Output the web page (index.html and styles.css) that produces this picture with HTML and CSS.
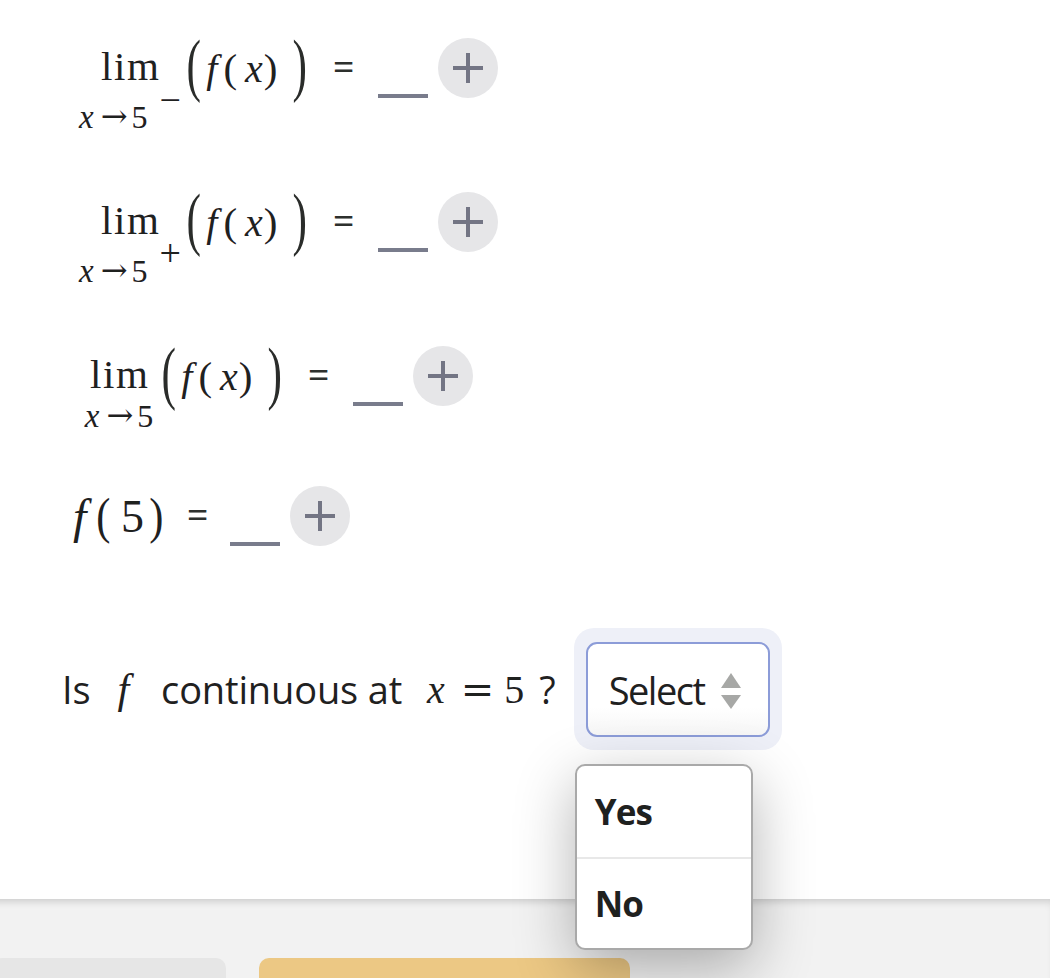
FILE: index.html
```html
<!DOCTYPE html>
<html lang="en">
<head>
<meta charset="utf-8">
<title>Limits</title>
<link rel="stylesheet" href="styles.css">
</head>
<body>
<main class="sheet">
  <div class="row row-1">
    <div class="lim-col lim-wide">
      <span class="lim">lim</span>
      <span class="sub"><span class="sx">x</span><span class="arrow">→</span><span class="sd">5</span><span class="sup sup-minus">−</span></span>
    </div>
    <span class="bigp">(</span><span class="mf">f</span><span class="p">(</span><span class="mx">x</span><span class="p">)</span><span class="bigp bigp-r">)</span>
    <span class="eq">=</span>
    <div class="ans"><span class="blank"></span><button class="plus" aria-label="add"><span class="plus-h"></span><span class="plus-v"></span></button></div>
  </div>

  <div class="row row-2">
    <div class="lim-col lim-wide">
      <span class="lim">lim</span>
      <span class="sub"><span class="sx">x</span><span class="arrow">→</span><span class="sd">5</span><span class="sup sup-plus">+</span></span>
    </div>
    <span class="bigp">(</span><span class="mf">f</span><span class="p">(</span><span class="mx">x</span><span class="p">)</span><span class="bigp bigp-r">)</span>
    <span class="eq">=</span>
    <div class="ans"><span class="blank"></span><button class="plus" aria-label="add"><span class="plus-h"></span><span class="plus-v"></span></button></div>
  </div>

  <div class="row row-3">
    <div class="lim-col lim-narrow">
      <span class="lim">lim</span>
      <span class="sub sub-plain"><span class="sx">x</span><span class="arrow">→</span><span class="sd">5</span></span>
    </div>
    <span class="bigp">(</span><span class="mf">f</span><span class="p">(</span><span class="mx">x</span><span class="p">)</span><span class="bigp bigp-r">)</span>
    <span class="eq">=</span>
    <div class="ans"><span class="blank"></span><button class="plus" aria-label="add"><span class="plus-h"></span><span class="plus-v"></span></button></div>
  </div>

  <div class="row row-4">
    <span class="f4">f</span><span class="p4">(</span><span class="n4">5</span><span class="p4">)</span>
    <span class="eq eq-4">=</span>
    <div class="ans"><span class="blank"></span><button class="plus" aria-label="add"><span class="plus-h"></span><span class="plus-v"></span></button></div>
  </div>

  <div class="question">
    <span class="qtext">Is</span>
    <span class="qf">f</span>
    <span class="qtext">continuous at</span>
    <span class="qmath"><span class="qx">x</span><span class="qeq">=</span><span class="qn">5</span></span>
    <span class="qtext qmark">?</span>
    <div class="select-wrap">
      <div class="select">
        <span class="select-label">Select</span>
        <span class="arrows"><span class="tri-up"></span><span class="tri-down"></span></span>
      </div>
      <ul class="menu">
        <li class="menu-item">Yes</li>
        <li class="menu-item">No</li>
      </ul>
    </div>
  </div>
</main>
<footer class="footer">
  <div class="btn btn-gray"></div>
  <div class="btn btn-gold"></div>
</footer>
</body>
</html>
```

FILE: styles.css
```css
* { box-sizing: border-box; }
html, body { margin: 0; padding: 0; }
body {
  width: 1050px;
  height: 978px;
  overflow: hidden;
  background: #ffffff;
  color: #1f211f;
  font-family: "Open Sans", "Liberation Sans", sans-serif;
}

.sheet {
  height: 899px;
  padding-top: 38px;
  background: #ffffff;
  position: relative;
}

/* ---------- math rows ---------- */
.row {
  display: flex;
  align-items: center;
  height: 60px;
  padding-left: 78px;
  font-family: "Liberation Serif", "DejaVu Serif", serif;
  color: #1f211f;
}
.row-2, .row-3 { margin-top: 94px; }
.row-4 { margin-top: 80px; padding-left: 73px; }

.lim-col {
  display: flex;
  flex-direction: column;
  align-items: center;
  height: 40px;
  margin-top: -4px;
}
.lim-wide { width: 108px; padding-right: 4px; }
.lim-narrow { width: 83px; padding-right: 1px; }
.lim {
  font-size: 41px;
  line-height: 40px;
  letter-spacing: 1.6px;
  margin-right: -1.6px;
}
.sub {
  display: flex;
  align-items: baseline;
  line-height: 30px;
  white-space: nowrap;
  margin-top: 16px;
}
.sub-plain { margin-top: 7px; }
.sx { font-style: italic; font-size: 33px; margin-right: 7px; }
.arrow {
  font-family: "DejaVu Serif", serif;
  font-size: 32px;
  margin-right: 4px;
  position: relative;
  top: -1px;
}
.sd { font-size: 32px; }
.sup {
  font-size: 38px;
  line-height: 0;
  position: relative;
  margin-left: 12px;
}
.sup-minus { top: -15px; }
.sup-plus { top: -16px; }

.bigp {
  font-size: 70px;
  line-height: 60px;
  display: inline-block;
  transform: scaleX(0.62);
  margin: -6px -5px 0 -4px;
  color: #2a2c2a;
}
.bigp-r { margin-left: 10px; }
.mf { font-style: italic; font-size: 40px; margin: 0 6px 0 6px; }
.p { font-size: 41px; }
.mx { font-style: italic; font-size: 40px; margin: 0 1px 0 8px; }

.f4 { font-style: italic; font-size: 48px; margin-right: 9px; }
.p4 { font-size: 50px; display: inline-block; transform: scaleX(0.85); }
.n4 { font-size: 46px; margin: 0 4px 0 9px; }

.eq {
  font-family: "Open Sans", "Liberation Sans", sans-serif;
  font-size: 38px;
  line-height: 40px;
  color: #2d302d;
  margin: -6px 23px 0 27px;
}
.eq-4 { margin-left: 22px; margin-right: 22px; }

.ans {
  display: flex;
  align-items: flex-end;
  gap: 10px;
  height: 60px;
}
.blank {
  width: 50px;
  height: 4px;
  background: #797c8c;
}
.plus {
  width: 60px;
  height: 60px;
  border-radius: 50%;
  border: none;
  background: #e6e6e8;
  position: relative;
  padding: 0;
}
.plus-h, .plus-v {
  position: absolute;
  background: #737584;
}
.plus-h { left: 15px; top: 28px; width: 30px; height: 4px; }
.plus-v { left: 28px; top: 15px; width: 4px; height: 30px; }

/* ---------- question ---------- */
.question {
  display: flex;
  align-items: center;
  margin-top: 82px;
  padding-left: 62px;
  height: 122px;
}
.qtext {
  font-family: "Open Sans", "Liberation Sans", sans-serif;
  font-size: 38px;
  letter-spacing: -0.15px;
  color: #1f211f;
}
.qf {
  font-family: "Liberation Serif", "DejaVu Serif", serif;
  font-style: italic;
  font-size: 42px;
  margin: 0 32px 0 27px;
}
.qmath {
  display: flex;
  align-items: baseline;
  font-family: "Liberation Serif", "DejaVu Serif", serif;
  margin: 0 15px 0 25px;
}
.qx { font-style: italic; font-size: 40px; }
.qeq {
  font-family: "DejaVu Serif", serif;
  font-size: 40px;
  margin: 0 10px 0 16px;
}
.qn { font-size: 40px; }
.qmark { margin-right: 18px; }

/* ---------- select ---------- */
.select-wrap {
  position: relative;
  width: 208px;
  height: 122px;
  padding: 14px 12px 13px 12px;
  border-radius: 20px;
  background: #eef0f8;
}
.select {
  width: 184px;
  height: 95px;
  border: 2px solid #8c9cd8;
  border-radius: 11px;
  background: linear-gradient(#ffffff 70%, #f6f6f6);
  display: flex;
  align-items: center;
  padding-left: 21px;
  gap: 17px;
}
.select-label {
  font-size: 38px;
  letter-spacing: -1.5px;
  color: #1f211f;
}
.arrows {
  display: flex;
  flex-direction: column;
  gap: 7px;
  margin-top: 2px;
}
.tri-up, .tri-down {
  width: 0;
  height: 0;
  border-left: 10px solid transparent;
  border-right: 10px solid transparent;
}
.tri-up { border-bottom: 15px solid #a7a8a6; }
.tri-down { border-top: 14px solid #a7a8a6; }

.menu {
  position: absolute;
  left: 1px;
  top: 136px;
  width: 178px;
  height: 186px;
  margin: 0;
  padding: 0;
  list-style: none;
  background: #ffffff;
  border: 2px solid #a9a9a9;
  border-radius: 10px;
  box-shadow: 0 18px 60px rgba(0, 0, 0, 0.3);
  z-index: 5;
  overflow: hidden;
}
.menu-item {
  height: 91px;
  display: flex;
  align-items: center;
  padding-left: 18px;
  font-size: 35px;
  font-weight: 700;
  letter-spacing: -0.8px;
  color: #1f211f;
}
.menu-item + .menu-item { border-top: 2px solid #e8e8e8; }

/* ---------- footer ---------- */
.footer {
  height: 79px;
  background: #f2f2f2;
  box-shadow: inset 0 7px 8px -5px rgba(0, 0, 0, 0.18);
  display: flex;
  align-items: flex-start;
  padding-top: 59px;
  gap: 33px;
  margin-left: -8px;
}
.btn {
  height: 40px;
  border-radius: 10px;
}
.btn-gray { width: 234px; background: #e6e6e6; }
.btn-gold { width: 371px; background: #ecc884; }
```
